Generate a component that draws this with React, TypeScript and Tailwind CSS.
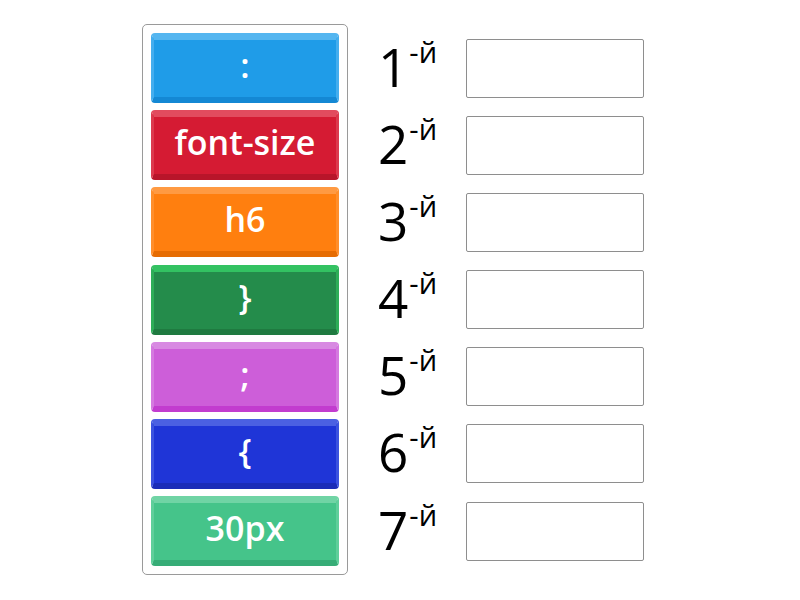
const tiles = [
  { label: ':', cls: 'bg-[#1f9ce8] border-t-[#55b6f0] border-x-[#45aeee] border-b-[#1488d4]' },
  { label: 'font-size', cls: 'bg-[#d51b33] border-t-[#e24b5e] border-x-[#dc3a4e] border-b-[#b8152a]' },
  { label: 'h6', cls: 'bg-[#ff7f0f] border-t-[#ff9a42] border-x-[#ff8f2c] border-b-[#e66c02]' },
  { label: '}', cls: 'bg-[#248c4b] border-t-[#33c262] border-x-[#2eae58] border-b-[#1f7a40]' },
  { label: ';', cls: 'bg-[#cd5ed9] border-t-[#d88ae2] border-x-[#d57ae0] border-b-[#c23ccf]' },
  { label: '{', cls: 'bg-[#1f35d7] border-t-[#4b60e2] border-x-[#3c53df] border-b-[#1a2cb8]' },
  { label: '30px', cls: 'bg-[#45c48a] border-t-[#70d4a5] border-x-[#5fcf9b] border-b-[#37ad77]' },
]

export default function App() {
  return (
    <div className="w-[800px] h-[600px] bg-white pl-[142px] pt-[24px] flex items-start font-['Open_Sans',sans-serif]">
      {/* answer tiles */}
      <div className="w-[206px] border border-[#9a9a9a] rounded-[5px] p-[8px] flex flex-col gap-[7.2px]">
        {tiles.map((t) => (
          <div
            key={t.label}
            className={`h-[70px] rounded-[4px] border-t-[7px] border-x-[3px] border-b-[6px] flex items-center justify-center text-white font-semibold text-[34px] leading-none ${t.cls}`}
          >
            <span className="-mt-[7px]">{t.label}</span>
          </div>
        ))}
      </div>

      {/* numbered slots */}
      <div className="ml-[30px] pt-[9px] flex flex-col gap-[7.2px]">
        {tiles.map((_, i) => (
          <div key={i} className="h-[70px] flex items-center">
            <div className="w-[88px] flex items-start text-black -mt-[4px]">
              <span className="text-[53px] leading-none">{i + 1}</span>
              <span className="text-[29px] leading-none -mt-[3px] ml-[1px]">-й</span>
            </div>
            <div className="w-[178px] h-[59px] border border-[#8e8e8e] rounded-[2px] bg-white" />
          </div>
        ))}
      </div>
    </div>
  )
}
